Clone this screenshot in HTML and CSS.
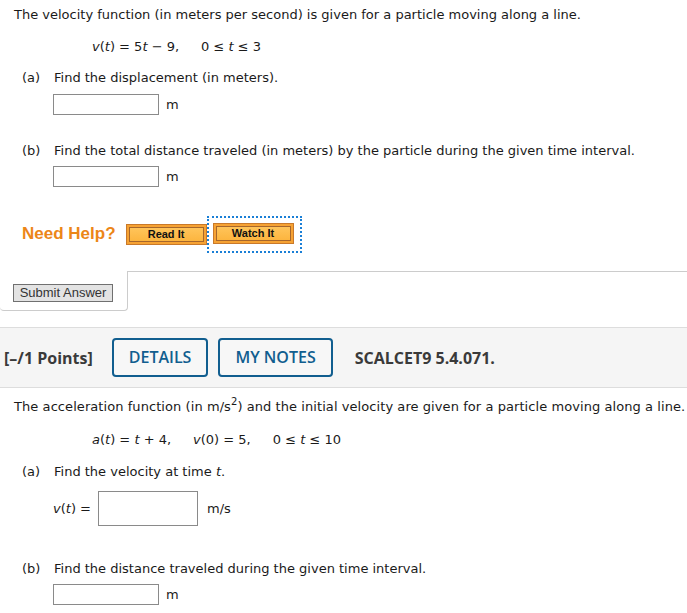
FILE: index.html
```html
<!DOCTYPE html>
<html>
<head>
<meta charset="utf-8">
<link rel="stylesheet" href="styles.css">
</head>
<body>
<div class="q">
  <p class="stem">The velocity function (in meters per second) is given for a particle moving along a line.</p>
  <div class="eq"><i>v</i>(<i>t</i>) = 5<i>t</i> − 9,<span class="sp"></span>0 ≤ <i>t</i> ≤ 3</div>
  <div class="part p1"><span class="lbl">(a)</span><span>Find the displacement (in meters).</span></div>
  <div class="ans a1"><span class="box"></span><span class="unit">m</span></div>
  <div class="part p2"><span class="lbl">(b)</span><span>Find the total distance traveled (in meters) by the particle during the given time interval.</span></div>
  <div class="ans a2"><span class="box"></span><span class="unit">m</span></div>
  <div class="help">
    <span class="need">Need Help?</span>
    <span class="hbtn"><span class="hin">Read It</span></span>
    <span class="focus"><span class="hbtn"><span class="hin">Watch It</span></span></span>
  </div>
</div>
<div class="tabs">
  <div class="tab"><span class="submit">Submit Answer</span></div>
  <div class="tabrest"></div>
</div>
<div class="header">
  <span class="pts">[–/1 Points]</span>
  <span class="hb">DETAILS</span>
  <span class="hb">MY NOTES</span>
  <span class="code">SCALCET9 5.4.071.</span>
</div>
<div class="q">
  <p class="stem s2">The acceleration function (in m/s<sup>2</sup>) and the initial velocity are given for a particle moving along a line.</p>
  <div class="eq e2"><i>a</i>(<i>t</i>) = <i>t</i> + 4,<span class="sp"></span><i>v</i>(0) = 5,<span class="sp"></span>0 ≤ <i>t</i> ≤ 10</div>
  <div class="part p4"><span class="lbl">(a)</span><span>Find the velocity at time <i>t</i>.</span></div>
  <div class="ans a3"><span class="var"><i>v</i>(<i>t</i>) =</span><span class="box big"></span><span class="unit u2">m/s</span></div>
  <div class="part p3"><span class="lbl">(b)</span><span>Find the distance traveled during the given time interval.</span></div>
  <div class="ans a2"><span class="box"></span><span class="unit">m</span></div>
</div>
</body>
</html>
```
FILE: styles.css
```css
* { box-sizing: border-box; }
body {
  margin: 0;
  font-family: "DejaVu Sans", Verdana, sans-serif;
  font-size: 13px;
  line-height: 16px;
  color: #1a1a1a;
  background: #fff;
}
.q { padding-left: 14px; }
.stem { margin: 7px 0 0 0; }
.stem.s2 { margin-top: 11px; letter-spacing: 0.07px; }
.stem sup { font-size: 10px; line-height: 0; vertical-align: 6px; }
.eq { margin-top: 16px; padding-left: 78px; }
.eq.e2 { margin-top: 17px; }
.sp { display: inline-block; width: 22px; }
.part { display: flex; margin-top: 15px; padding-left: 8px; }
.part.p2 { margin-top: 28px; }
.part.p4 { margin-top: 16px; }
.part.p3 { margin-top: 35px; }
.lbl { width: 32px; }
.ans { display: flex; align-items: center; padding-left: 39px; }
.a1 { margin-top: 8px; }
.a2 { margin-top: 7px; }
.a3 { margin-top: 11px; }
.box {
  display: inline-block;
  width: 106px;
  height: 21px;
  border: 1px solid #8a8a8a;
  background: #fff;
}
.box.big { width: 100px; height: 35px; margin-left: 7px; }
.unit { margin-left: 7px; }
.unit.u2 { margin-left: 9px; }
.help {
  display: flex;
  align-items: center;
  margin-top: 29px;
  padding-left: 8px;
  height: 36px;
}
.need {
  font-family: "Liberation Sans", Arial, sans-serif;
  font-weight: bold;
  font-size: 17px;
  color: #ec8618;
  margin-right: 10px;
}
.hbtn {
  display: inline-block;
  width: 81px;
  height: 21px;
  background: #f6a233;
  border: 1px solid #c9792a;
  padding: 2px;
}
.hin {
  display: block;
  height: 15px;
  border: 1px solid #a6662b;
  background: linear-gradient(#ffc45a, #fcb53f);
  font-family: "Liberation Sans", Arial, sans-serif;
  font-weight: bold;
  font-size: 11px;
  line-height: 13px;
  text-align: center;
  color: #111;
}
.focus {
  display: inline-block;
  margin-left: 0;
  padding: 5px 6px 7px 4px;
  border: 2px dotted #1a7fd6;
}
.tabs { display: flex; margin-top: 19px; }
.tab {
  width: 128px;
  height: 40px;
  border-right: 1px solid #cccccc;
  border-bottom: 1px solid #cccccc;
  border-bottom-right-radius: 4px;
  border-bottom-left-radius: 4px;
  padding: 13px 0 0 13px;
}
.tabrest { flex: 1; border-top: 1px solid #cccccc; }
.submit {
  display: inline-block;
  width: 100px;
  height: 18px;
  border: 1px solid #707070;
  background: #e3e3e3;
  font-family: "Liberation Sans", Arial, sans-serif;
  font-size: 13px;
  line-height: 16px;
  text-align: center;
  color: #333;
}
.header {
  margin-top: 16px;
  height: 61px;
  background: #f5f5f5;
  border-top: 1px solid #dddddd;
  border-bottom: 1px solid #dddddd;
  display: flex;
  align-items: center;
  padding-left: 4px;
  font-family: "Open Sans", sans-serif;
  font-size: 16px;
  color: #3a3a3a;
}
.pts { font-weight: bold; margin-right: 19px; }
.hb {
  display: inline-block;
  height: 39px;
  line-height: 35px;
  border: 2px solid #115e8f;
  border-radius: 4px;
  padding: 0 15px;
  color: #115e8f;
  font-weight: 600;
  background: #f7f7f7;
  margin-right: 10px;
}
.code { font-weight: bold; margin-left: 12px; }
```
